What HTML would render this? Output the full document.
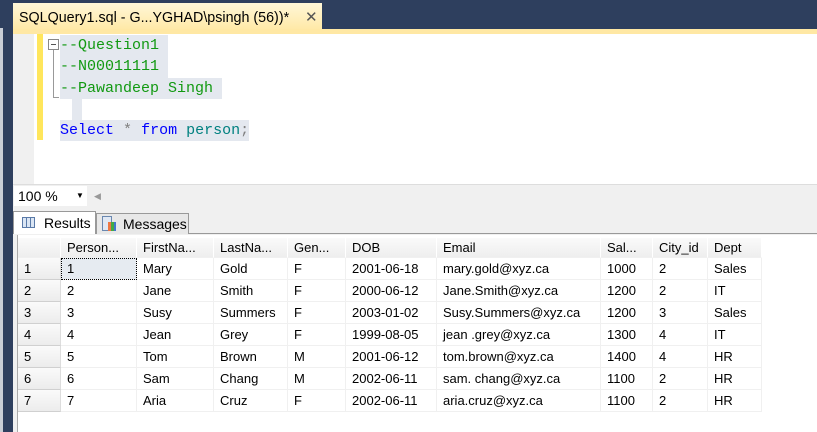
<!DOCTYPE html>
<html><head><style>
*{margin:0;padding:0;box-sizing:border-box}
body{width:817px;height:432px;background:#2e3f5e;position:relative;overflow:hidden;font-family:"Liberation Sans",Arial,sans-serif}
.a{position:absolute}
.code{font-family:"Liberation Mono",monospace;font-size:15px;white-space:pre}
.ln{display:block;height:21.3px;line-height:21.3px}
.sel{background:#e4e8ef;display:inline-block;height:21.3px}
.g{color:#119911}
.grid{font-size:13px;color:#000}
.cell{position:absolute;height:22px;line-height:22px;padding-left:6px;border-right:1px solid #f0f0f0;border-bottom:1px solid #f0f0f0;white-space:nowrap;overflow:hidden}
.hd{background:linear-gradient(#fafafa,#eeeeee);border-right:1px solid #fff;height:20px;line-height:20px}
.rn{background:linear-gradient(#fafafa,#ececec);border-right:1px solid #ddd;border-bottom:1px solid #d0d0d0}
</style></head><body>
<div class="a" style="left:0;top:28px;width:3px;height:404px;background:#c9ced6"></div>
<div class="a" style="left:13px;top:3px;width:309px;height:28px;background:linear-gradient(#fff7d8,#ffe8a4);font-size:14.3px;line-height:30px;padding-left:6px;color:#000">SQLQuery1.sql - G...YGHAD\psingh (56))*<span style="position:absolute;left:292px;top:0;color:#555;font-size:15px">✕</span></div>
<div class="a" style="left:13px;top:29px;width:804px;height:5px;background:#ffe8a4"></div>
<div class="a" style="left:13px;top:34px;width:804px;height:150px;background:#fff"></div>
<div class="a" style="left:13px;top:34px;width:21px;height:150px;background:#f0f0f0"></div>
<div class="a" style="left:37px;top:34px;width:6px;height:106px;background:#ffe65c"></div>
<div class="a" style="left:48px;top:39px;width:11px;height:11px;border:1px solid #888;background:#fff"></div>
<div class="a" style="left:51px;top:44px;width:5px;height:1px;background:#555"></div>
<div class="a" style="left:53px;top:50px;width:1px;height:48px;background:#999"></div>
<div class="a" style="left:53px;top:97px;width:6px;height:1px;background:#999"></div>
<div class="a code" style="left:60px;top:35px"><span class="ln"><span class="sel g">--Question1 </span></span><span class="ln"><span class="sel g">--N00011111 </span></span><span class="ln"><span class="sel g">--Pawandeep Singh </span></span><span class="ln"><span class="sel" style="margin-left:12px;width:10px"></span></span><span class="ln"><span class="sel"><span style="color:#0000ff">Select</span> <span style="color:#808080">*</span> <span style="color:#0000ff">from</span> <span style="color:#008080">person</span><span style="color:#808080">;</span></span></span></div>
<div class="a" style="left:13px;top:184px;width:804px;height:26px;background:#f0f0f0;border-top:1px solid #ddd"></div>
<div class="a" style="left:14px;top:186px;width:73px;height:20px;background:#fff;font-size:14px;line-height:20px;padding-left:4px">100 %<span style="position:absolute;left:62px;top:0;font-size:8px">▼</span></div>
<div class="a" style="left:94px;top:186px;font-size:9px;line-height:20px;color:#999">◀</div>
<div class="a" style="left:13px;top:210px;width:804px;height:24px;background:#f0f0f0;border-bottom:1px solid #999"></div>
<div class="a" style="left:13px;top:211px;width:83px;height:24px;background:#fff;border:1px solid #999;border-bottom:none;font-size:14px;line-height:22px;padding-left:30px">Results</div>
<div class="a" style="left:22px;top:217px;width:13px;height:11px;border:1px solid #5a7aa8;background:repeating-linear-gradient(90deg,#dbe6f4 0 3px,#5a7aa8 3px 4px)"></div>
<div class="a" style="left:96px;top:213px;width:93px;height:21px;background:#e8e8e8;border:1px solid #999;border-bottom:none;font-size:14px;line-height:21px;padding-left:26px">Messages</div>
<div class="a" style="left:102px;top:216px;width:10px;height:15px;border:1px solid #6a88b0;background:#e0e8f4"></div>
<div class="a" style="left:108px;top:222px;width:8px;height:9px;background:linear-gradient(90deg,#e74 0 3px,#4a4 3px 6px,#47c 6px)"></div>
<div class="a" style="left:13px;top:234px;width:804px;height:198px;background:#f0f0f0"></div>
<div class="a" style="left:17px;top:235px;width:800px;height:197px;background:#fff;border-left:1px solid #aaa"></div>
<div class="a grid" style="left:18px;top:238px">
<div class="cell hd" style="left:0;top:0;width:43px"></div>
<div class="cell hd" style="left:43px;top:0;width:76px">Person...</div>
<div class="cell hd" style="left:119px;top:0;width:77px">FirstNa...</div>
<div class="cell hd" style="left:196px;top:0;width:74px">LastNa...</div>
<div class="cell hd" style="left:270px;top:0;width:58px">Gen...</div>
<div class="cell hd" style="left:328px;top:0;width:91px">DOB</div>
<div class="cell hd" style="left:419px;top:0;width:164px">Email</div>
<div class="cell hd" style="left:583px;top:0;width:52px">Sal...</div>
<div class="cell hd" style="left:635px;top:0;width:55px">City_id</div>
<div class="cell hd" style="left:690px;top:0;width:54px">Dept</div>
</div>
<div class="a grid" id="rows" style="left:18px;top:258px"></div>
<script>
var d=[["1","Mary","Gold","F","2001-06-18","mary.gold@xyz.ca","1000","2","Sales"],
["2","Jane","Smith","F","2000-06-12","Jane.Smith@xyz.ca","1200","2","IT"],
["3","Susy","Summers","F","2003-01-02","Susy.Summers@xyz.ca","1200","3","Sales"],
["4","Jean","Grey","F","1999-08-05","jean .grey@xyz.ca","1300","4","IT"],
["5","Tom","Brown","M","2001-06-12","tom.brown@xyz.ca","1400","4","HR"],
["6","Sam","Chang","M","2002-06-11","sam. chang@xyz.ca","1100","2","HR"],
["7","Aria","Cruz","F","2002-06-11","aria.cruz@xyz.ca","1100","2","HR"]];
var xs=[43,119,196,270,328,419,583,635,690],ws=[76,77,74,58,91,164,52,55,54],h="";
d.forEach(function(r,i){var t=i*22;
h+='<div class="cell rn" style="left:0;top:'+t+'px;width:43px">'+(i+1)+'</div>';
r.forEach(function(v,j){var ex=(i==0&&j==0)?'background:#e6ebf1;outline:1px dotted #000;outline-offset:-1px;':'';
h+='<div class="cell" style="'+ex+'left:'+xs[j]+'px;top:'+t+'px;width:'+ws[j]+'px">'+v+'</div>';});});
document.getElementById('rows').innerHTML=h;
</script>
</body></html>
